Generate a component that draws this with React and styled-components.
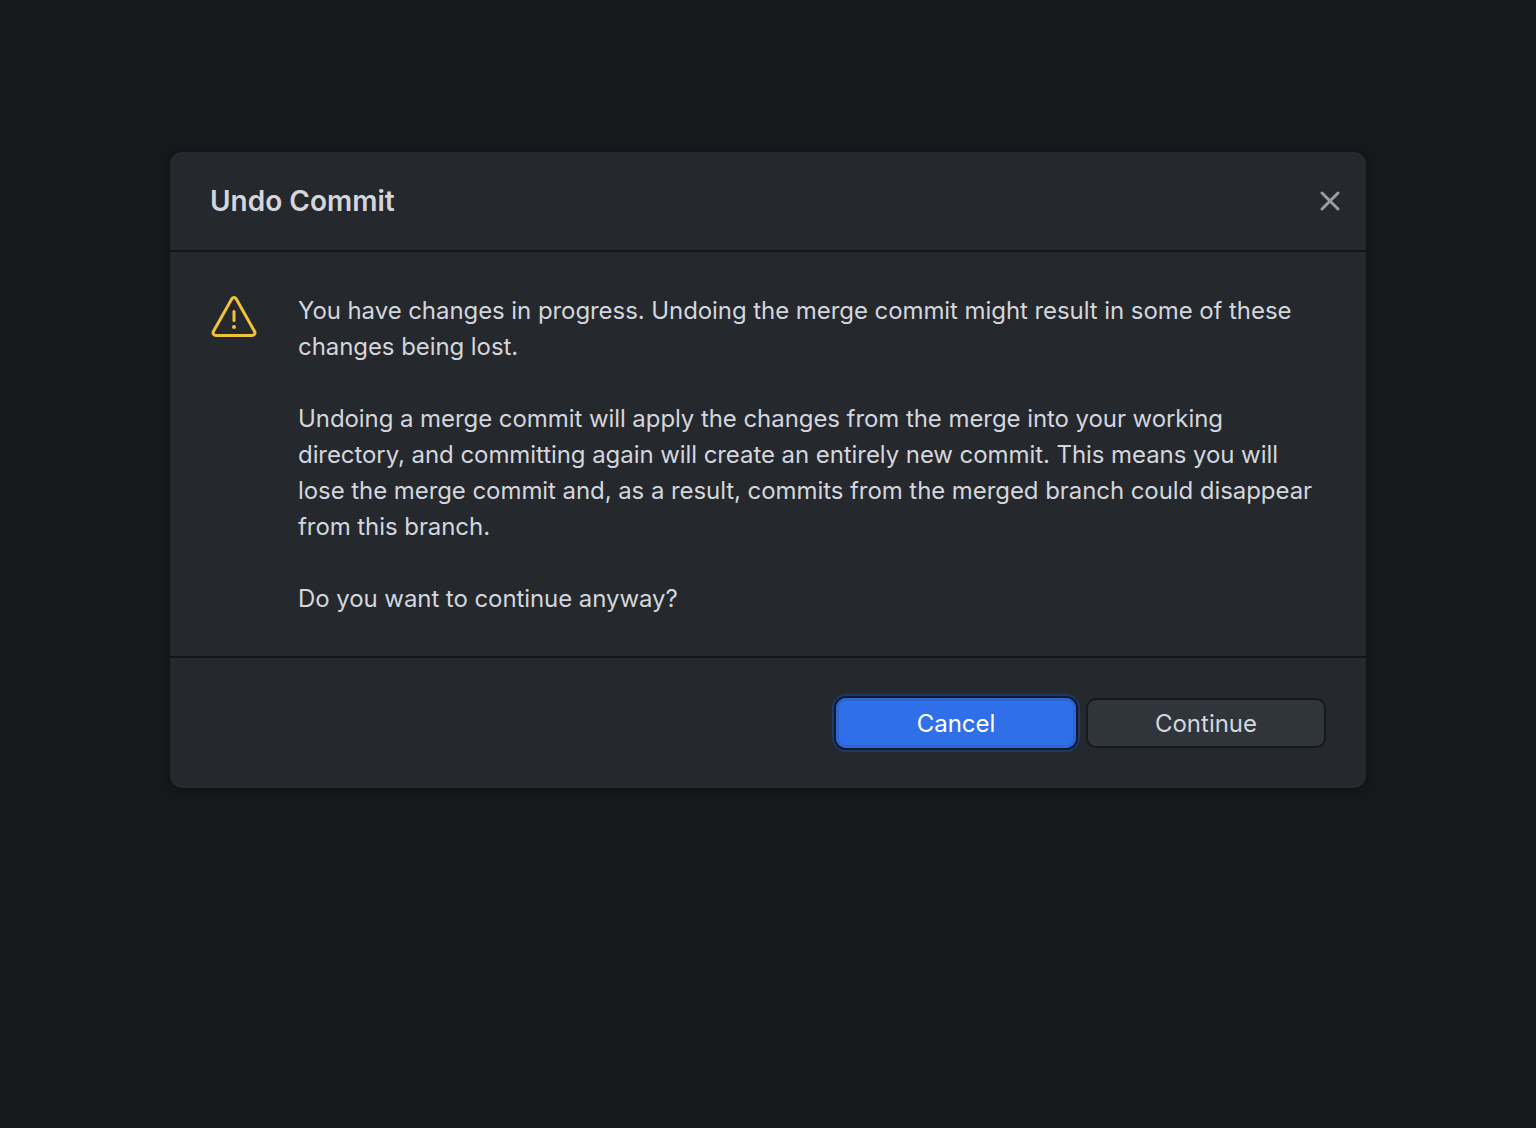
import React from "react";
import styled, { createGlobalStyle } from "styled-components";

const GlobalStyle = createGlobalStyle`
  html, body {
    margin: 0;
    padding: 0;
    background: #16181b;
  }
  * {
    box-sizing: border-box;
  }
`;

const Page = styled.div`
  min-height: 1128px;
  display: flex;
  justify-content: center;
  align-items: flex-start;
  padding-top: 152px;
  background: #16181b;
  font-family: Inter, "Liberation Sans", sans-serif;
`;

const Dialog = styled.div`
  width: 1196px;
  background: #25282d;
  border-radius: 12px;
  box-shadow: 0 2px 8px rgba(0, 0, 0, 0.35);
  color: #d3d6dc;
`;

const Header = styled.header`
  height: 100px;
  display: flex;
  align-items: center;
  justify-content: space-between;
  padding: 0 22px 0 40px;
  border-bottom: 2px solid #141619;
`;

const Title = styled.h1`
  margin: 0;
  font-size: 28px;
  line-height: 36px;
  font-weight: 600;
  color: #d3d6dc;
`;

const CloseButton = styled.button`
  width: 28px;
  height: 28px;
  padding: 0;
  display: flex;
  align-items: center;
  justify-content: center;
  border: 0;
  background: none;
  color: #9a9da4;
`;

const Body = styled.div`
  display: flex;
  padding: 41px 40px 39px;
  border-bottom: 2px solid #141619;
`;

const IconSlot = styled.div`
  flex: 0 0 88px;
  padding-top: 1px;
`;

const Copy = styled.div`
  flex: 1;
  font-size: 24px;
  line-height: 36px;
  letter-spacing: -0.07px;
`;

const Paragraph = styled.p`
  margin: 0 0 36px;

  &:last-child {
    margin-bottom: 0;
  }
`;

const Footer = styled.footer`
  height: 130px;
  display: flex;
  align-items: center;
  justify-content: flex-end;
  gap: 10px;
  padding: 0 40px;
`;

const Button = styled.button`
  width: 240px;
  height: 50px;
  border-radius: 10px;
  font-family: inherit;
  font-size: 24px;
  border: ${(p) => (p.$primary ? "0" : "2px solid #17191c")};
  background: ${(p) => (p.$primary ? "#2f6fe8" : "#30343b")};
  color: ${(p) => (p.$primary ? "#ffffff" : "#d3d6dc")};
  box-shadow: ${(p) =>
    p.$primary
      ? "0 0 0 2px #111a2b, 0 0 0 4px #1f3763, inset 0 0 0 3px #2d66d3"
      : "none"};
`;

const WarningIcon = () => (
  <svg width="48" height="44" viewBox="0 0 48 44" fill="none" stroke="#f0c23c" strokeWidth="3" strokeLinecap="round" strokeLinejoin="round">
    <path d="M22 4.6 3.4 37.4c-1 1.9.2 4 2.3 4h36.6c2.1 0 3.3-2.1 2.3-4L26 4.6c-.9-1.6-3.1-1.6-4 0Z" />
    <path d="M24 17.5v9" />
    <circle cx="24" cy="33" r="2" fill="#f0c23c" stroke="none" />
  </svg>
);

const CloseIcon = () => (
  <svg width="28" height="28" viewBox="0 0 28 28" fill="none" stroke="currentColor" strokeWidth="3" strokeLinecap="round">
    <path d="M6 6l16 16M22 6 6 22" />
  </svg>
);

const App = () => {
  return (
    <Page>
      <GlobalStyle />
      <Dialog>
        <Header>
          <Title>Undo Commit</Title>
          <CloseButton aria-label="Close">
            <CloseIcon />
          </CloseButton>
        </Header>
        <Body>
          <IconSlot>
            <WarningIcon />
          </IconSlot>
          <Copy>
            <Paragraph>
              You have changes in progress. Undoing the merge commit might result in some of these changes being lost.
            </Paragraph>
            <Paragraph>
              Undoing a merge commit will apply the changes from the merge into your working directory, and committing again will create an entirely new commit. This means you will lose the merge commit and, as a result, commits from the merged branch could disappear from this branch.
            </Paragraph>
            <Paragraph>Do you want to continue anyway?</Paragraph>
          </Copy>
        </Body>
        <Footer>
          <Button $primary>Cancel</Button>
          <Button>Continue</Button>
        </Footer>
      </Dialog>
    </Page>
  );
};

export default App;
